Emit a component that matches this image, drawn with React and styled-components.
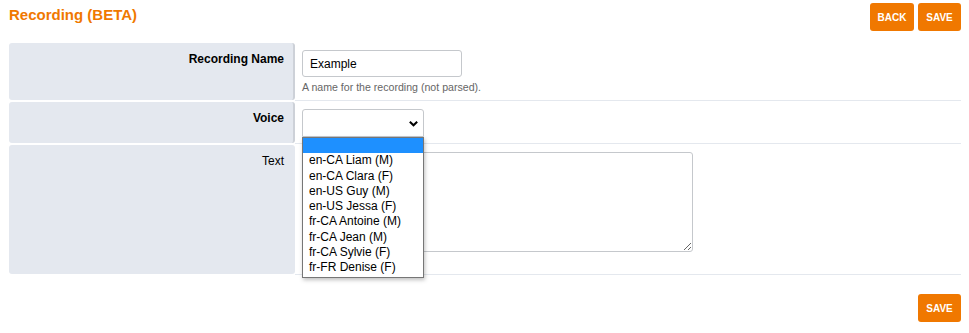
import { createGlobalStyle } from 'styled-components'
import styled from 'styled-components'

const GlobalStyle = createGlobalStyle`
  body {
    margin: 0;
    background: #fff;
    font-family: "Liberation Sans", Arial, sans-serif;
    color: #000;
  }
`

const orange = '#f07800'

const Page = styled.div`
  padding: 3px 8px 0 9px;
`

const Header = styled.div`
  display: flex;
  justify-content: space-between;
  align-items: flex-start;
  height: 40px;
`

const Title = styled.h1`
  margin: 3px 0 0;
  font-size: 15px;
  font-weight: bold;
  color: ${orange};
`

const Actions = styled.div`
  display: flex;
  gap: 4px;
`

const Button = styled.button`
  width: ${(p) => (p.$w ? p.$w : 43)}px;
  height: 28px;
  padding: 0;
  border: none;
  border-radius: 3px;
  background: ${orange};
  color: #fff;
  font-family: "Liberation Sans", Arial, sans-serif;
  font-size: 10px;
  font-weight: bold;
  cursor: pointer;
`

const Form = styled.div`
  display: grid;
  grid-template-columns: 286px 1fr;
`

const Label = styled.div`
  background: #e4e8ef;
  border-radius: 3px;
  border-right: ${(p) => (p.$edge ? '2px solid #cdd1d8' : '2px solid transparent')};
  margin-bottom: 2px;
  height: ${(p) => p.$h}px;
  padding: 9px 9px 0 0;
  box-sizing: border-box;
  text-align: right;
  font-size: 12px;
  font-weight: ${(p) => (p.$bold ? 'bold' : 'normal')};
`

const Field = styled.div`
  position: relative;
  border-bottom: 1px solid #e4e8ee;
  margin-bottom: 1px;
  padding: 7px 0 0 7px;
  height: ${(p) => p.$h}px;
  box-sizing: border-box;
`

const TextInput = styled.input`
  width: 160px;
  height: 27px;
  box-sizing: border-box;
  border: 1px solid #c5c8cc;
  border-radius: 3px;
  padding: 0 7px;
  font-family: "Liberation Sans", Arial, sans-serif;
  font-size: 12px;
  color: #000;
`

const Help = styled.div`
  margin-top: 4px;
  font-size: 10.6px;
  color: #666;
`

const SelectBox = styled.div`
  width: 122px;
  height: 28px;
  box-sizing: border-box;
  border: 1px solid #c5c8cc;
  border-radius: 3px 3px 0 0;
  display: flex;
  align-items: center;
  justify-content: flex-end;
  padding-right: 4px;
`

const OptionList = styled.ul`
  position: absolute;
  left: 7px;
  top: 35px;
  z-index: 2;
  width: 122px;
  margin: 0;
  padding: 0 0 2px;
  list-style: none;
  background: #fff;
  border: 1px solid #767676;
  box-sizing: border-box;
  box-shadow: 1px 2px 4px rgba(0, 0, 0, 0.25);
`

const Option = styled.li`
  height: 15.25px;
  line-height: 15.25px;
  padding-left: 6px;
  font-size: 12px;
  background: ${(p) => (p.$active ? '#1e90ff' : 'transparent')};
  white-space: nowrap;
`

const TextArea = styled.textarea`
  display: block;
  width: 391px;
  height: 100px;
  box-sizing: border-box;
  border: 1px solid #c5c8cc;
  border-radius: 3px;
  resize: both;
  font-family: "Liberation Sans", Arial, sans-serif;
`

const Footer = styled.div`
  display: flex;
  justify-content: flex-end;
  padding-top: 18px;
`

const voices = [
  'en-CA Liam (M)',
  'en-CA Clara (F)',
  'en-US Guy (M)',
  'en-US Jessa (F)',
  'fr-CA Antoine (M)',
  'fr-CA Jean (M)',
  'fr-CA Sylvie (F)',
  'fr-FR Denise (F)',
]

function Chevron() {
  return (
    <svg width="11" height="11" viewBox="0 0 12 12">
      <path d="M2 4 L6 8 L10 4" fill="none" stroke="#000" strokeWidth="2.2" />
    </svg>
  )
}

export default function App() {
  return (
    <>
      <GlobalStyle />
      <Page>
        <Header>
          <Title>Recording (BETA)</Title>
          <Actions>
            <Button $w={44}>BACK</Button>
            <Button>SAVE</Button>
          </Actions>
        </Header>

        <Form>
          <Label $h={57} $bold $edge>Recording Name</Label>
          <Field $h={58}>
            <TextInput defaultValue="Example" />
            <Help>A name for the recording (not parsed).</Help>
          </Field>

          <Label $h={41} $bold $edge>Voice</Label>
          <Field $h={42}>
            <SelectBox>
              <Chevron />
            </SelectBox>
            <OptionList>
              <Option $active>&nbsp;</Option>
              {voices.map((v) => (
                <Option key={v}>{v}</Option>
              ))}
            </OptionList>
          </Field>

          <Label $h={129}>Text</Label>
          <Field $h={130}>
            <TextArea />
          </Field>
        </Form>

        <Footer>
          <Button>SAVE</Button>
        </Footer>
      </Page>
    </>
  )
}
